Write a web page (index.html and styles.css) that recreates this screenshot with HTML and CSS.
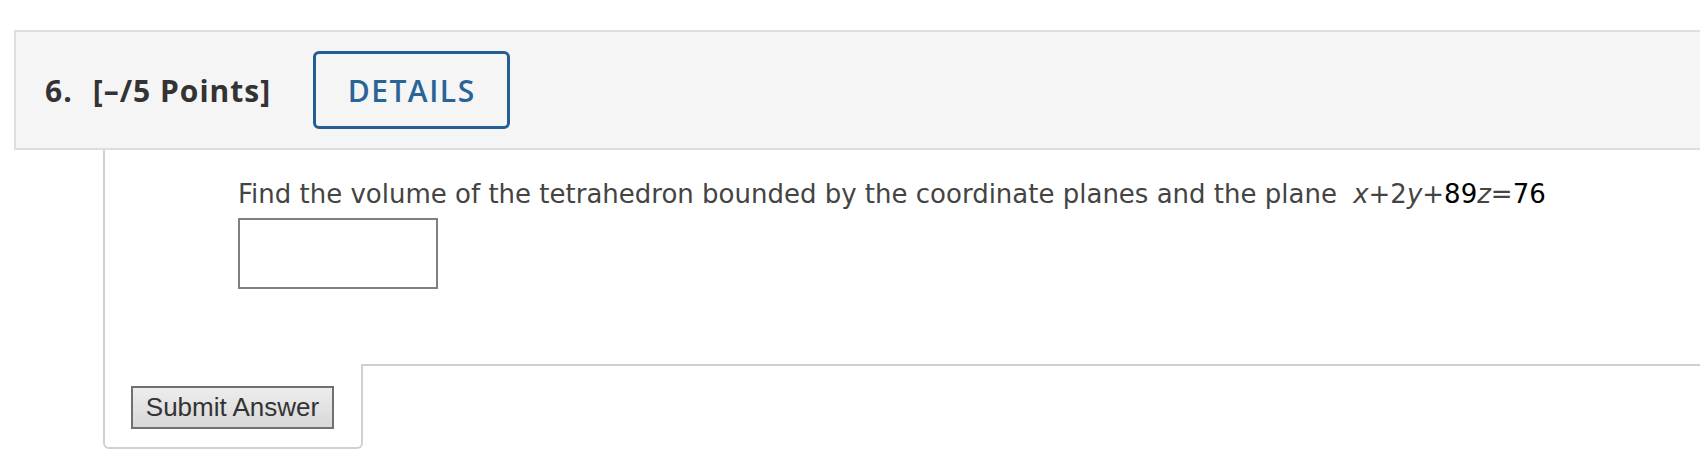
FILE: index.html
```html
<!DOCTYPE html>
<html lang="en">
<head>
    <meta charset="UTF-8">
    <title>Question 6</title>
    <link rel="stylesheet" href="styles.css">
</head>
<body>
    <div class="question">
        <div class="q-header">
            <span class="q-title"><span class="q-num">6.</span>[–/5 Points]</span>
            <button class="details-btn">DETAILS</button>
        </div>
        <div class="q-body">
            <p class="q-text">Find the volume of the tetrahedron bounded by the coordinate planes and the plane <span class="math"><i>x</i>+2<i>y</i>+<span class="num">89</span><i>z</i>=<span class="num">76</span></span></p>
            <input type="text" class="answer">
        </div>
        <div class="q-footer">
            <div class="submit-tab">
                <button class="submit-btn">Submit Answer</button>
            </div>
            <div class="filler"></div>
        </div>
    </div>
</body>
</html>
```

FILE: styles.css
```css
body {
    margin: 0;
    padding: 0;
    background-color: #fff;
    font-family: "DejaVu Sans", Verdana, sans-serif;
    color: #444;
}
.question {
    padding-top: 30px;
    padding-left: 14px;
}
.q-header {
    display: flex;
    align-items: center;
    height: 116px;
    background-color: #f5f5f5;
    border: 2px solid #dedede;
    border-right: none;
    padding-left: 29px;
}
.q-title {
    font-family: "Open Sans", sans-serif;
    font-weight: 700;
    font-size: 30px;
    letter-spacing: 1px;
    color: #333;
    white-space: pre;
}
.q-num {
    margin-right: 20px;
}
.details-btn {
    margin-left: 42px;
    width: 197px;
    height: 78px;
    background: transparent;
    border: 3px solid #235f92;
    border-radius: 6px;
    font-family: "Open Sans", sans-serif;
    font-weight: 600;
    font-size: 30px;
    letter-spacing: 1.5px;
    color: #2a6496;
    padding: 0;
}
.q-body {
    margin-left: 89px;
    border-left: 2px solid #d0d0d0;
    height: 214px;
    padding-left: 133px;
    box-sizing: border-box;
    padding-top: 24px;
}
.q-text {
    margin: 0;
    font-size: 26px;
    line-height: 40px;
}
.math {
    margin-left: 8px;
}
.num {
    color: #000;
}
.answer {
    display: block;
    margin-top: 4px;
    width: 200px;
    height: 71px;
    box-sizing: border-box;
    border: 2px solid #808080;
    padding: 0;
}
.q-footer {
    display: flex;
    margin-left: 89px;
}
.submit-tab {
    width: 260px;
    height: 85px;
    box-sizing: border-box;
    border: 2px solid #d0d0d0;
    border-top: none;
    border-radius: 0 0 6px 6px;
    padding-top: 22px;
    padding-left: 26px;
}
.submit-btn {
    display: block;
    width: 203px;
    height: 43px;
    border: 2px solid #707070;
    background: linear-gradient(#ededed, #d8d8d8);
    font-family: "Liberation Sans", Arial, sans-serif;
    font-size: 26px;
    color: #333;
    padding: 0;
}
.filler {
    flex: 1;
    border-top: 2px solid #d0d0d0;
}
```
